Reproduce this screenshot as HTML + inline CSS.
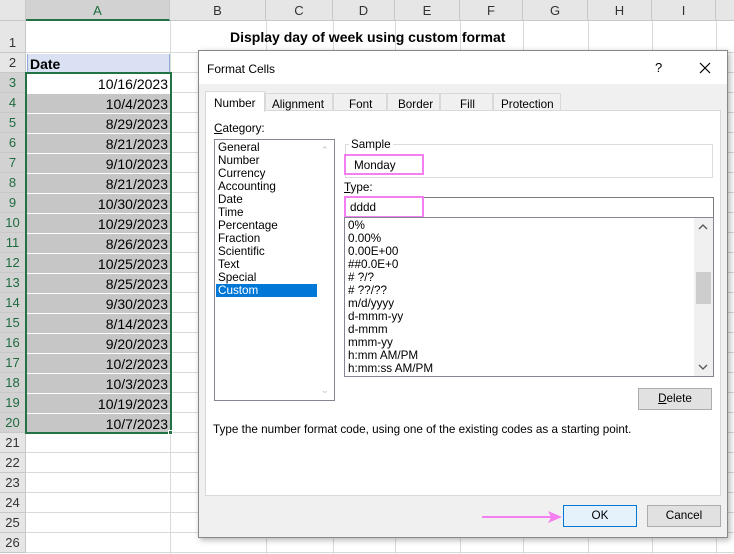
<!DOCTYPE html>
<html><head><style>
*{box-sizing:border-box;margin:0;padding:0}
body{width:734px;height:554px;overflow:hidden;background:#fff;font-family:"Liberation Sans",sans-serif;position:relative}
.a{position:absolute}
.ch{top:0;height:21px;background:#e6e6e6;border-right:1px solid #c8c8c8;border-bottom:1px solid #c8c8c8;font-size:13px;color:#333;text-align:center;line-height:21px}
.rh{left:0;width:26px;background:#e6e6e6;border-bottom:1px solid #c8c8c8;border-right:1px solid #c8c8c8;font-size:13px;color:#333;text-align:center}
.vl{top:21px;bottom:0;width:1px;background:#dadada}
.hl{left:26px;right:0;height:1px;background:#dadada}
.cell{left:27px;width:143px;height:19px;font-size:14px;text-align:right;padding-right:2px;line-height:20px;color:#000}
.t{font-size:11.7px;color:#000;font-family:"Liberation Sans",sans-serif;white-space:nowrap}
.btn{background:#e1e1e1;border:1px solid #adadad;font-size:11.7px;text-align:center}
</style></head><body>
<div class="a ch" style="left:0;width:26px"></div>
<div class="a ch" style="left:26px;width:144px;color:#1e6b3e;border-bottom:2px solid #217346;background:#d2d2d2">A</div>
<div class="a ch" style="left:170px;width:96px">B</div>
<div class="a ch" style="left:266px;width:67px">C</div>
<div class="a ch" style="left:333px;width:62px">D</div>
<div class="a ch" style="left:395px;width:65px">E</div>
<div class="a ch" style="left:460px;width:63px">F</div>
<div class="a ch" style="left:523px;width:65px">G</div>
<div class="a ch" style="left:588px;width:64px">H</div>
<div class="a ch" style="left:652px;width:64px">I</div>
<div class="a ch" style="left:716px;width:20px"></div>
<div class="a vl" style="left:170px"></div><div class="a vl" style="left:266px"></div><div class="a vl" style="left:333px"></div><div class="a vl" style="left:395px"></div><div class="a vl" style="left:460px"></div><div class="a vl" style="left:523px"></div><div class="a vl" style="left:588px"></div><div class="a vl" style="left:652px"></div><div class="a vl" style="left:716px"></div>
<div id="rows"></div>
<div class="a" style="left:230px;top:29px;font-size:14px;font-weight:bold">Display day of week using custom format</div>
<div class="a" style="left:27px;top:54px;width:143px;height:19px;background:#d9e1f2;font-size:14px;font-weight:bold;padding-left:2px;line-height:20px;border:1px solid #8ea9db;border-top:none">Date</div>
<div id="cells"></div>
<div class="a" style="left:25px;top:72px;width:147px;height:362px;border:2px solid #217346"></div>
<div class="a" style="left:168px;top:430px;width:5px;height:5px;background:#217346;border:1px solid #fff"></div>
<script>
var r='',c='';
var hs=[[1,21,32],[2,53,20]];
for(var i=3;i<=26;i++)hs.push([i,73+(i-3)*20,20]);
hs.forEach(function(h){var g=(h[0]>=3&&h[0]<=20);r+='<div class="a rh" style="top:'+h[1]+'px;height:'+h[2]+'px;line-height:'+(h[0]==1?44:20)+'px;'+(g?'color:#1e6b3e;background:#d2d2d2':'')+'"><span style="font-size:13px">'+h[0]+'</span></div><div class="a hl" style="top:'+(h[1]+h[2]-1)+'px"></div>';});
document.getElementById('rows').innerHTML=r;
var d=['10/16/2023','10/4/2023','8/29/2023','8/21/2023','9/10/2023','8/21/2023','10/30/2023','10/29/2023','8/26/2023','10/25/2023','8/25/2023','9/30/2023','8/14/2023','9/20/2023','10/2/2023','10/3/2023','10/19/2023','10/7/2023'];
d.forEach(function(v,i){c+='<div class="a cell" style="top:'+(74+i*20)+'px;background:'+(i?'#c6c6c6':'#fff')+'">'+v+'</div>';});
document.getElementById('cells').innerHTML=c;
</script>
<div class="a" style="left:198px;top:50px;width:530px;height:488px;background:#f0f0f0;border:1px solid #888;box-shadow:2px 2px 6px rgba(0,0,0,.3)">
 <div class="a" style="left:0;top:0;width:528px;height:33px;background:#fff"></div>
 <div class="a t" style="left:8px;top:11px;font-size:12px">Format Cells</div>
 <div class="a t" style="left:456px;top:9px;font-size:13px">?</div>
 <svg class="a" style="left:500px;top:11px" width="12" height="12"><path d="M1 1L11 11M11 1L1 11" stroke="#000" stroke-width="1.2"/></svg>
 <div class="a" style="left:6px;top:59px;width:516px;height:386px;background:#fff;border:1px solid #d9d9d9"></div>
 <div class="a t" style="left:6px;top:40px;width:60px;height:21px;background:#fff;border:1px solid #d9d9d9;border-bottom:none;padding:5px 0 0 8px">Number</div>
 <div class="a t" style="left:66px;top:42px;width:68px;height:18px;background:#f0f0f0;border:1px solid #d9d9d9;padding:4px 0 0 6px">Alignment</div>
 <div class="a t" style="left:134px;top:42px;width:54px;height:18px;background:#f0f0f0;border:1px solid #d9d9d9;padding:4px 0 0 15px">Font</div>
 <div class="a t" style="left:188px;top:42px;width:53px;height:18px;background:#f0f0f0;border:1px solid #d9d9d9;padding:4px 0 0 10px">Border</div>
 <div class="a t" style="left:241px;top:42px;width:53px;height:18px;background:#f0f0f0;border:1px solid #d9d9d9;padding:4px 0 0 19px">Fill</div>
 <div class="a t" style="left:294px;top:42px;width:68px;height:18px;background:#f0f0f0;border:1px solid #d9d9d9;padding:4px 0 0 7px">Protection</div>
 <div class="a t" style="left:15px;top:71px"><u>C</u>ategory:</div>
 <div class="a" style="left:15px;top:88px;width:121px;height:262px;border:1px solid #828790;background:#fff">
  <div class="a t" style="left:3px;top:1px;line-height:13px">General<br>Number<br>Currency<br>Accounting<br>Date<br>Time<br>Percentage<br>Fraction<br>Scientific<br>Text<br>Special</div>
  <div class="a t" style="left:1px;top:144px;width:101px;height:13px;background:#0078d7;color:#fff;padding-left:2px;line-height:13px">Custom</div>
  <div class="a" style="left:106px;top:5px;color:#bbb;font-size:9px">&#8963;</div>
  <div class="a" style="left:106px;top:245px;color:#bbb;font-size:9px">&#8964;</div>
 </div>
 <div class="a" style="left:146px;top:93px;width:368px;height:34px;border:1px solid #dcdcdc"></div>
 <div class="a t" style="left:150px;top:87px;background:#fff;padding:0 2px">Sample</div>
 <div class="a t" style="left:145px;top:103px;width:80px;height:21px;border:2px solid #f47ff0;padding:3px 0 0 8px">Monday</div>
 <div class="a t" style="left:145px;top:130px"><u>T</u>ype:</div>
 <div class="a" style="left:145px;top:146px;width:370px;height:21px;border:1px solid #7a7a7a;background:#fff"></div>
 <div class="a t" style="left:145px;top:145px;width:80px;height:22px;border:2px solid #f47ff0;padding:3px 0 0 4px">dddd</div>
 <div class="a" style="left:145px;top:166px;width:370px;height:160px;border:1px solid #828790;background:#fff">
  <div class="a t" style="left:3px;top:1px;line-height:13px">0%<br>0.00%<br>0.00E+00<br>##0.0E+0<br># ?/?<br># ??/??<br>m/d/yyyy<br>d-mmm-yy<br>d-mmm<br>mmm-yy<br>h:mm AM/PM<br>h:mm:ss AM/PM</div>
  <div class="a" style="left:349px;top:0;width:19px;height:158px;background:#f0f0f0"></div>
  <div class="a" style="left:351px;top:54px;width:15px;height:32px;background:#cdcdcd"></div>
  <svg class="a" style="left:353px;top:6px" width="10" height="6"><path d="M1 5L5 1L9 5" stroke="#555" fill="none" stroke-width="1.3"/></svg>
  <svg class="a" style="left:353px;top:146px" width="10" height="6"><path d="M1 1L5 5L9 1" stroke="#555" fill="none" stroke-width="1.3"/></svg>
 </div>
 <div class="a btn" style="left:439px;top:337px;width:74px;height:22px;line-height:20px"><u>D</u>elete</div>
 <div class="a t" style="left:14px;top:372px">Type the number format code, using one of the existing codes as a starting point.</div>
 <div class="a btn" style="left:364px;top:454px;width:74px;height:22px;line-height:20px;background:#e5f1fb;border-color:#0078d7">OK</div>
 <div class="a btn" style="left:448px;top:454px;width:74px;height:22px;line-height:20px">Cancel</div>
</div>
<svg class="a" style="left:480px;top:508px" width="84" height="20"><path d="M2 9L72 9" stroke="#f47ff0" stroke-width="2"/><path d="M82 9L68 3L71 9L68 15Z" fill="#f47ff0"/></svg>
</body></html>
